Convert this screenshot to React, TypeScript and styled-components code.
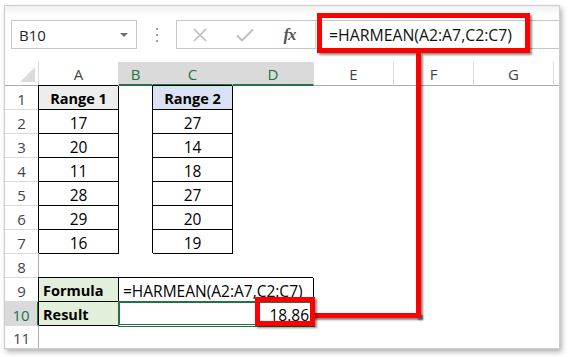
import styled, { createGlobalStyle } from 'styled-components';

const GlobalStyle = createGlobalStyle`
  body {
    margin: 0;
    background: #fff;
    font-family: "Open Sans", "Liberation Sans", sans-serif;
  }
`;

const GREEN = '#217346';
const RED = '#ff0000';

const Page = styled.div`
  position: relative;
  width: 568px;
  height: 357px;
  padding: 5px 0 0 4px;
  box-sizing: border-box;
`;

const Window = styled.div`
  width: 556px;
  height: 344px;
  box-sizing: border-box;
  border: 1px solid #cdcdcd;
  box-shadow: 2px 3px 5px rgba(0, 0, 0, 0.3);
  background: #fff;
  display: flex;
  flex-direction: column;
  overflow: hidden;
`;

const Toolbar = styled.div`
  height: 56px;
  flex-shrink: 0;
  box-sizing: border-box;
  padding: 14px 0 0 6px;
  display: flex;
  align-items: flex-start;
  background: linear-gradient(#f0f0f0, #fff 9px);
`;

const NameBox = styled.div`
  width: 126px;
  height: 29px;
  box-sizing: border-box;
  border: 1px solid #c6c6c6;
  background: #fff;
  display: flex;
  align-items: center;
  justify-content: space-between;
  padding: 0 8px 0 7px;
  font-size: 15px;
  color: #262626;
`;

const Caret = styled.span`
  width: 0;
  height: 0;
  border-left: 4px solid transparent;
  border-right: 4px solid transparent;
  border-top: 4px solid #6e6e6e;
`;

const Grip = styled.div`
  width: 39px;
  height: 29px;
  display: flex;
  flex-direction: column;
  align-items: center;
  justify-content: center;
  gap: 4px;
  span {
    width: 2px;
    height: 2px;
    background: #a0a0a0;
  }
`;

const FormulaBar = styled.div`
  flex: 1;
  height: 29px;
  box-sizing: border-box;
  border: 1px solid #c6c6c6;
  border-right: none;
  background: #fff;
  display: flex;
  align-items: stretch;
`;

const BarButton = styled.div`
  width: 45px;
  display: flex;
  align-items: center;
  justify-content: center;
`;

const Fx = styled.span`
  font-family: "Liberation Serif", serif;
  font-style: italic;
  font-weight: 700;
  font-size: 17px;
  color: #555;
  letter-spacing: -1px;
`;

const FormulaText = styled.div`
  flex: 1;
  margin-left: 3px;
  border-left: 1px solid #d4d4d4;
  display: flex;
  align-items: center;
  padding-left: 13px;
  font-size: 15.8px;
  color: #111;
`;

const Sheet = styled.div`
  flex: 1;
  display: grid;
  grid-template-columns: 34px 80px 34px 80px 81px 80px 80px 80px 1fr;
  grid-template-rows: repeat(11, 24px) 1fr;
`;

const Corner = styled.div`
  box-sizing: border-box;
  border-right: 1px solid #dadada;
  border-bottom: 1px solid #ababab;
  display: flex;
  align-items: flex-end;
  justify-content: flex-end;
  padding: 0 3px 3px 0;
  span {
    width: 0;
    height: 0;
    border-left: 15px solid transparent;
    border-bottom: 15px solid #dcdcdc;
  }
`;

const ColHead = styled.div<{ $sel?: boolean }>`
  box-sizing: border-box;
  border-right: 1px solid #dadada;
  border-bottom: ${(p) => (p.$sel ? `2px solid ${GREEN}` : '1px solid #ababab')};
  background: ${(p) => (p.$sel ? '#dadada' : '#fff')};
  color: ${(p) => (p.$sel ? GREEN : '#444')};
  display: flex;
  align-items: center;
  justify-content: center;
  padding-top: ${(p) => (p.$sel ? '1px' : '0')};
  font-size: 15px;
`;

const RowHead = styled.div<{ $sel?: boolean }>`
  box-sizing: border-box;
  border-bottom: 1px solid #dadada;
  border-right: ${(p) => (p.$sel ? `2px solid ${GREEN}` : '1px solid #ababab')};
  background: ${(p) => (p.$sel ? '#dadada' : '#fff')};
  color: ${(p) => (p.$sel ? GREEN : '#444')};
  display: flex;
  align-items: center;
  justify-content: center;
  padding-top: 2px;
  font-size: 15px;
`;

type Fill = 'grey' | 'blue' | 'green';
const fills: Record<Fill, string> = {
  grey: '#ededed',
  blue: '#d9e1f2',
  green: '#e2efda',
};

const Cell = styled.div<{
  $box?: boolean;
  $fill?: Fill;
  $align?: 'left' | 'center' | 'right';
  $bold?: boolean;
  $span?: number;
  $active?: boolean;
}>`
  box-sizing: border-box;
  grid-column: ${(p) => (p.$span ? `span ${p.$span}` : 'auto')};
  border-right: 1px solid ${(p) => (p.$box ? '#000' : 'transparent')};
  border-bottom: 1px solid ${(p) => (p.$box ? '#000' : 'transparent')};
  box-shadow: ${(p) =>
    p.$active
      ? `0 0 0 1px ${GREEN}, inset 0 0 0 1px ${GREEN}`
      : p.$box
      ? '-1px -1px 0 0 #000'
      : 'none'};
  background: ${(p) => (p.$fill ? fills[p.$fill] : 'transparent')};
  display: flex;
  align-items: center;
  justify-content: ${(p) =>
    p.$align === 'left' ? 'flex-start' : p.$align === 'right' ? 'flex-end' : 'center'};
  padding: 2px 4px 0 4px;
  font-size: 15.5px;
  font-weight: ${(p) => (p.$bold ? 700 : 400)};
  color: #000;
  white-space: nowrap;
  overflow: visible;
`;

const BoldLabel = styled.span`
  font-size: 14.5px;
`;

const Mark = styled.div`
  position: absolute;
  box-sizing: border-box;
  box-shadow: 2px 2px 2px rgba(0, 0, 0, 0.45);
`;

const MarkBox = styled(Mark)`
  border: 5px solid ${RED};
`;

const MarkLine = styled(Mark)`
  background: ${RED};
`;

const columns = ['A', 'B', 'C', 'D', 'E', 'F', 'G'];
const selectedCols = ['B', 'C', 'D'];
const rangeA = [17, 20, 11, 28, 29, 16];
const rangeC = [27, 14, 18, 27, 20, 19];
const FORMULA = '=HARMEAN(A2:A7,C2:C7)';

function Blanks({ count }: { count: number }) {
  return (
    <>
      {Array.from({ length: count }, (_, i) => (
        <Cell key={i} />
      ))}
    </>
  );
}

function Row({ n, a, c }: { n: number; a: number; c: number }) {
  return (
    <>
      <RowHead>{n}</RowHead>
      <Cell $box>{a}</Cell>
      <Cell />
      <Cell $box>{c}</Cell>
      <Blanks count={5} />
    </>
  );
}

function App() {
  return (
    <Page>
      <GlobalStyle />
      <Window>
        <Toolbar>
          <NameBox>
            <span>B10</span>
            <Caret />
          </NameBox>
          <Grip>
            <span />
            <span />
            <span />
          </Grip>
          <FormulaBar>
            <BarButton>
              <svg width="14" height="14" viewBox="0 0 14 14">
                <path d="M1 1 L13 13 M13 1 L1 13" stroke="#bdbdbd" strokeWidth="1.6" fill="none" />
              </svg>
            </BarButton>
            <BarButton>
              <svg width="18" height="14" viewBox="0 0 18 14">
                <path d="M1 7.5 L6 12.5 L17 1.5" stroke="#bdbdbd" strokeWidth="1.8" fill="none" />
              </svg>
            </BarButton>
            <BarButton>
              <Fx>fx</Fx>
            </BarButton>
            <FormulaText>{FORMULA}</FormulaText>
          </FormulaBar>
        </Toolbar>

        <Sheet>
          <Corner>
            <span />
          </Corner>
          {columns.map((c) => (
            <ColHead key={c} $sel={selectedCols.includes(c)}>
              {c}
            </ColHead>
          ))}
          <ColHead />

          <RowHead>1</RowHead>
          <Cell $box $fill="grey" $bold>
            <BoldLabel>Range 1</BoldLabel>
          </Cell>
          <Cell />
          <Cell $box $fill="blue" $bold>
            <BoldLabel>Range 2</BoldLabel>
          </Cell>
          <Blanks count={5} />

          {rangeA.map((a, i) => (
            <Row key={i} n={i + 2} a={a} c={rangeC[i]} />
          ))}

          <RowHead>8</RowHead>
          <Blanks count={8} />

          <RowHead>9</RowHead>
          <Cell $box $fill="green" $bold $align="left">
            <BoldLabel>Formula</BoldLabel>
          </Cell>
          <Cell $box $span={3} $align="left">
            {FORMULA}
          </Cell>
          <Blanks count={4} />

          <RowHead $sel>10</RowHead>
          <Cell $box $fill="green" $bold $align="left">
            <BoldLabel>Result</BoldLabel>
          </Cell>
          <Cell $active $span={3} $align="right">
            18.86
          </Cell>
          <Blanks count={4} />

          <RowHead>11</RowHead>
          <Blanks count={8} />
        </Sheet>
      </Window>

      <MarkBox style={{ left: 317, top: 13, width: 213, height: 40 }} />
      <MarkLine style={{ left: 416, top: 53, width: 5, height: 265 }} />
      <MarkLine style={{ left: 313, top: 313, width: 108, height: 5 }} />
      <MarkBox style={{ left: 255, top: 297, width: 60, height: 29 }} />
    </Page>
  );
}

export default App;
